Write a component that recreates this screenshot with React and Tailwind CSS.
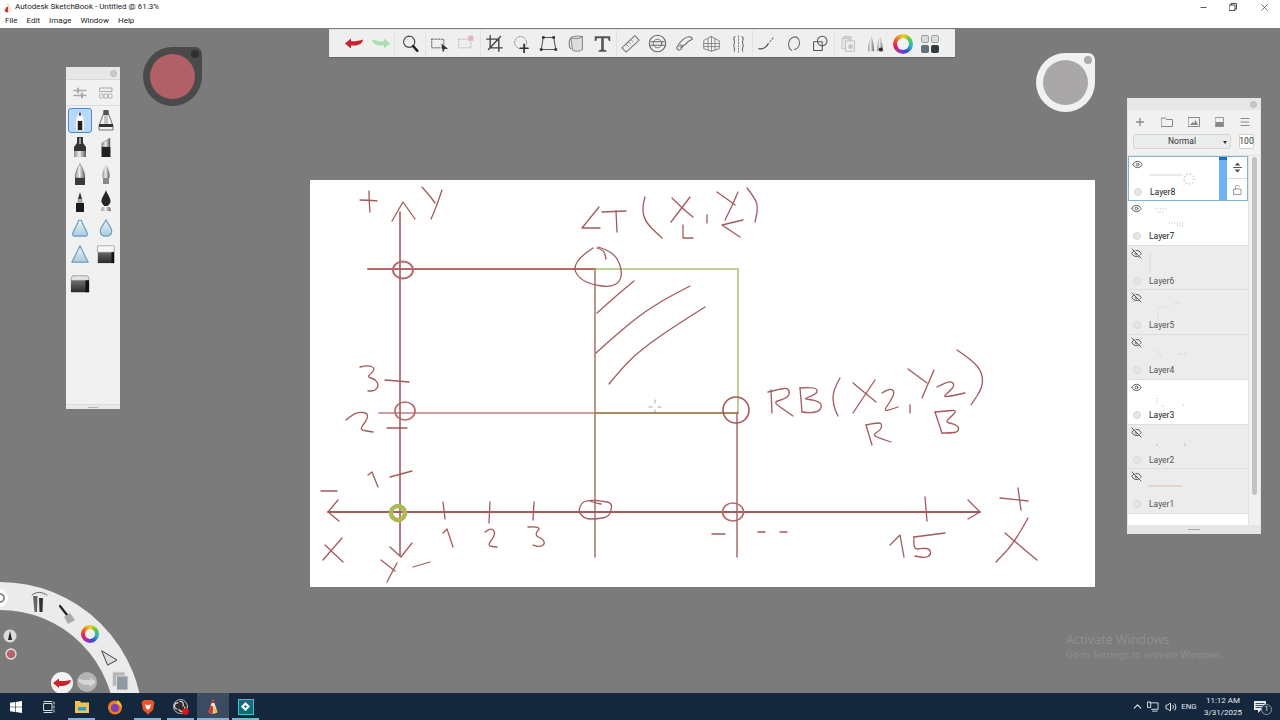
import React from "react";
import { Plus, Menu, Eye, EyeOff, ChevronUp, Minus, X, Volume2 } from "lucide-react";

const INK = "#a25a5c";

// page coordinates, the svg viewBox starts where the sheet starts
const smoothStrokes = [
  "360,200 368,200 377,201", "369,191 369,200 370,212",
  "422,187 430,196 435,203", "442,190 437,205 431,219",
  "593,248 582,255 573,268 580,279 593,285 610,287 620,282 622,271 617,257 607,250 598,247",
  "597,248 604,250 606,259",
  "645,197 642,207 645,222 662,238",
  "672,198 682,208 693,217", "690,197 681,209 671,222",
  "717,192 727,199 735,205", "738,192 732,206 725,220",
  "747,188 755,198 758,208 755,222",
  "360,367 368,365 375,368 372,373 367,377 375,379 379,385 375,391 368,391",
  "346,420 353,414 360,412 367,413 368,418 363,425 360,430 373,432",
  "485,532 490,528 495,531 494,537 487,546 497,547",
  "528,527 542,526 534,535 543,539 545,544 540,547 533,545",
  "840,378 833,390 833,405 838,416",
  "882,393 890,388 895,392 890,402 883,412 898,407",
  "937,387 950,380 955,385 949,392 942,398 965,393",
  "957,350 972,360 982,372 983,387 971,405",
  "768,392 780,389 788,388 790,394 785,399 773,402 783,409 793,416",
  "800,388 815,387 818,392 812,396 803,399 815,400 822,404 820,411 811,413 802,412",
  "866,425 875,423 882,423 881,430 872,435 882,439 891,442",
  "935,412 946,411 957,410 952,416 945,422 954,424 959,427 958,432 950,433 942,433",
  "914,537 913,550 922,548 930,549 931,555 925,558 915,556",
  "1028,518 1015,542 996,562", "1005,533 1020,546 1037,560",
  "579,512 580,503 590,500 602,501 612,503 611,511 608,517 597,519 585,519 579,512",
  "590,501 596,503 601,504",
  "597,313 617,295 634,281",
  "596,353 610,340 640,315 665,299 690,286",
  "609,384 627,362 650,343 675,326 705,307",
];

const sharpStrokes = [
  "392,221 403,202 415,219",
  "338,500 328,512 339,521",
  "390,547 401,557 412,543",
  "968,500 980,512 968,519",
  "599,207 582,228 600,228",
  "602,212 626,211", "616,211 617,232",
  "683,225 683,238 693,238",
  "707,215 707,223",
  "743,220 722,225 740,237",
  "385,380 409,382", "387,428 407,428", "390,477 412,471",
  "368,475 372,472 378,487", "321,491 337,491",
  "443,502 445,519", "490,502 489,523", "534,502 533,520",
  "443,533 447,529 453,547",
  "323,560 342,538", "325,545 343,562",
  "381,560 395,571", "397,563 387,582", "413,567 430,562",
  "771,390 772,413", "800,388 802,412",
  "853,383 876,402", "875,380 853,413", "910,405 910,413",
  "908,369 927,383", "934,370 922,398",
  "866,425 872,445", "935,412 942,433",
  "925,497 927,521", "890,545 900,535 904,557", "945,533 914,537",
  "1000,498 1028,501", "1018,488 1021,510",
  "712,534 725,534", "758,532 765,532", "780,532 787,532",
];

const smooth = (s) => {
  const pts = s.split(" ").map((p) => p.split(",").map(Number));
  let d = `M${pts[0][0]} ${pts[0][1]}`;
  for (let i = 1; i < pts.length - 1; i++) {
    const mx = (pts[i][0] + pts[i + 1][0]) / 2;
    const my = (pts[i][1] + pts[i + 1][1]) / 2;
    d += ` Q${pts[i][0]} ${pts[i][1]} ${mx} ${my}`;
  }
  const last = pts[pts.length - 1];
  return d + ` L${last[0]} ${last[1]}`;
};

const Sketch = () => (
  <svg viewBox="310 180 785 407" className="w-full h-full" fill="none" strokeLinecap="round" strokeLinejoin="round">
    <path d="M368 269H595" stroke="#b8696c" strokeWidth="2" />
    <path d="M595 269H738V412" stroke="#b3c07c" strokeWidth="1.6" />
    <path d="M379 413H595" stroke="#bd7f81" strokeWidth="1.7" />
    <path d="M595 413H738" stroke="#a9885a" strokeWidth="2" />
    <path d="M400 212V555" stroke={INK} strokeWidth="1.6" />
    <path d="M595 269V557" stroke="#a8706a" strokeWidth="1.5" />
    <path d="M737 413V557" stroke="#a8686a" strokeWidth="1.5" />
    <path d="M328 512H980" stroke={INK} strokeWidth="1.8" />
    <ellipse cx="403" cy="270" rx="10" ry="8.5" stroke="#b8696c" strokeWidth="2" />
    <ellipse cx="405" cy="411" rx="10" ry="9" stroke="#b8696c" strokeWidth="1.7" />
    <circle cx="736" cy="410" r="13" stroke="#a8585a" strokeWidth="1.6" />
    <ellipse cx="733" cy="512" rx="10.5" ry="9" stroke="#b8696c" strokeWidth="1.7" />
    <circle cx="398" cy="513" r="7" stroke="#a9bb55" strokeWidth="4.5" />
    {smoothStrokes.map((s) => (
      <path key={s} d={smooth(s)} stroke={INK} strokeWidth="1.3" />
    ))}
    {sharpStrokes.map((s) => (
      <polyline key={s} points={s} stroke={INK} strokeWidth="1.3" />
    ))}
    <path d="M655 400V403M655 410V413M649 407H652M658 407H661" stroke="#8a8a8a" strokeWidth="0.8" />
  </svg>
);

const ColorWheel = ({ className }) => (
  <div className={`${className} rounded-full flex items-center justify-center bg-[conic-gradient(#f4d020,#5cc83c,#2fb7c4,#3150d0,#a030c0,#e02050,#f07020,#f4d020)]`}>
    <div className="w-3/5 h-3/5 rounded-full bg-[#f2f2f2]" />
  </div>
);

const Ic = ({ w = 22, h = 22, vb = "0 0 22 22", children }) => (
  <svg width={w} height={h} viewBox={vb} fill="none" strokeLinecap="round" strokeLinejoin="round">
    {children}
  </svg>
);

const ArrowShape = ({ color, flip }) => (
  <svg width="20" height="13" viewBox="0 0 20 13" className={flip ? "-scale-x-100" : ""}>
    <path d="M1 6.5L7 1.5V4.2C11 4.5 15 4 19 2.5C18.5 6.5 15 9 7 8.5V11.5Z" fill={color} />
  </svg>
);

const toolGroups = [
  [
    <ArrowShape color="#c9242c" />,
    <ArrowShape color="#a9dfae" flip />,
  ],
  [
    <Ic><circle cx="9.5" cy="9" r="6.5" stroke="#444" strokeWidth="1.3" /><path d="M14 14L19 19.5" stroke="#222" strokeWidth="2.8" /></Ic>,
  ],
  [
    <Ic><path d="M2 6H16V16H2Z" stroke="#555" strokeDasharray="2 1.6" /><path d="M13 11L21 17L17 17.5L15 21.5Z" fill="#333" /></Ic>,
    <Ic><path d="M2 6H16V16H2Z" stroke="#bbb" strokeDasharray="2 1.6" /><rect x="13" y="2" width="6" height="6" fill="#e3b4be" /></Ic>,
  ],
  [
    <Ic><path d="M6 2V16H20M2 6H16V20M18 3L4 18" stroke="#444" strokeWidth="1.6" /></Ic>,
    <Ic><circle cx="10" cy="10" r="7" stroke="#888" strokeDasharray="2 1.6" /><path d="M14 12V21M9.5 16.5H18.5" stroke="#333" strokeWidth="2" /></Ic>,
    <Ic><path d="M5 4H17L19.5 18H2.5Z" stroke="#555" strokeWidth="1.2" /><g fill="#333"><rect x="3.5" y="2.5" width="3" height="3" /><rect x="15.5" y="2.5" width="3" height="3" /><rect x="1" y="16.5" width="3" height="3" /><rect x="18" y="16.5" width="3" height="3" /></g></Ic>,
    <Ic><path d="M6 4C9 2 16 2 19 3V18C16 20.5 11 20.5 8 19Z" fill="#ddd" stroke="#777" /><path d="M6 5C3 6 3 16 6 17" stroke="#777" strokeWidth="1.3" /><path d="M6 4C10 6 15 6 19 3" stroke="#777" /></Ic>,
    <Ic><path d="M2 2.5H20V8H18.5L17 5H12.5V18L15.5 19V20.5H6.5V19L9.5 18V5H5L3.5 8H2Z" fill="#555" /></Ic>,
  ],
  [
    <Ic><path d="M1 16L16 2L21 7L6 21Z" stroke="#777" strokeWidth="1.2" /><path d="M6 12L8 14M9 9.5L11 11.5M12 7L14 9" stroke="#777" /></Ic>,
    <Ic><circle cx="11" cy="11" r="9.5" stroke="#666" strokeWidth="1.3" /><path d="M3.5 9H18.5M3 13H19" stroke="#666" strokeWidth="1.3" /><ellipse cx="11" cy="11" rx="5" ry="5" stroke="#666" /></Ic>,
    <Ic><path d="M2 16C3 20 7 19 8 16C9 12 12 13 14 10C15 8 18 8 20 6C20 2 14 3 11 5C8 7 5 10 2 16Z" stroke="#666" strokeWidth="1.2" /><circle cx="7" cy="14" r="1.5" stroke="#666" /></Ic>,
    <Ic><path d="M11 3L20 8V17L11 20L2 17V8Z" stroke="#777" /><path d="M7 5.5V18.5M11 3V20M15 5.5V18.5M2 11H20M2 14.5H20" stroke="#777" strokeWidth="0.9" /></Ic>,
    <Ic><path d="M11 2V21" stroke="#777" strokeDasharray="2 1.6" /><path d="M7 3C3 5 8 8 6 11C4 14 8 17 6 20M15 3C19 5 14 8 16 11C18 14 14 17 16 20" stroke="#666" strokeWidth="1.2" /></Ic>,
  ],
  [
    <Ic><path d="M2 17C8 18 12 14 13 11" stroke="#444" strokeWidth="1.3" /><path d="M15 9L16 7.5M17.5 6L18.5 4.5" stroke="#777" strokeWidth="1.3" /></Ic>,
    <Ic><path d="M9 19C4 16 4 7 10 4C14 2 18 5 18 10C18 14 15 17 12 18" stroke="#666" strokeWidth="1.2" /></Ic>,
    <Ic><rect x="3" y="9" width="10" height="10" stroke="#555" strokeWidth="1.2" /><circle cx="13" cy="8" r="5.5" stroke="#555" strokeWidth="1.2" /></Ic>,
  ],
  [
    <Ic><path d="M6 3H14V15H6Z" fill="#ddd" stroke="#bbb" /><path d="M4 5H12V17H4Z" fill="#e6e6e6" stroke="#bbb" /><path d="M8 8H18V20H8Z" fill="#eee" stroke="#bbb" /><rect x="11" y="12" width="5" height="5" fill="#bfc7c7" /></Ic>,
    <Ic><path d="M6 2C8 7 9 12 9.5 20H2C2.5 12 4 7 6 2Z" fill="url(#metal)" /><path d="M16 2C18 7 19 12 20 20H12.5C13 12 14 7 16 2Z" fill="url(#metal)" /><circle cx="17" cy="18" r="2.4" fill="#333" /></Ic>,
    <ColorWheel className="w-[20px] h-[20px]" />,
    <div className="grid grid-cols-2 gap-[2px]">
      <div className="w-[8px] h-[8px] rounded-[2px] bg-[#d9dcdc] border border-[#9aa2a2]" />
      <div className="w-[8px] h-[8px] rounded-[2px] bg-[#d9dcdc] border border-[#9aa2a2]" />
      <div className="w-[8px] h-[8px] rounded-[2px] bg-[#63727a]" />
      <div className="w-[8px] h-[8px] rounded-[2px] bg-[#333a3e]" />
    </div>,
  ],
];

const Toolbar = () => (
  <div className="absolute left-[329px] top-px h-[28px] w-[626px] pl-[11px] flex bg-[#efefef] border-t border-[#e2e2e2] shadow-[0_1px_1px_#666]">
    {toolGroups.map((group, i) => (
      <div key={i} className="flex items-center border-r border-[#e2e2e2] last:border-r-0">
        {group.map((icon, j) => (
          <div
            key={j}
            className={`h-full flex items-center justify-center ${i === 1 ? "w-[30px]" : "w-[27px]"} ${i > 0 ? "[&>svg]:w-[19px] [&>svg]:h-[19px]" : ""}`}
          >
            {icon}
          </div>
        ))}
      </div>
    ))}
  </div>
);

const Gradients = () => (
  <svg className="absolute w-0 h-0">
    <defs>
      <linearGradient id="metal" x1="0" x2="1" y1="0" y2="0">
        <stop offset="0" stopColor="#8d8d8d" />
        <stop offset="0.45" stopColor="#ececec" />
        <stop offset="1" stopColor="#5a5a5a" />
      </linearGradient>
      <linearGradient id="blueFill" x1="0" x2="0" y1="0" y2="1">
        <stop offset="0" stopColor="#eef5fa" />
        <stop offset="1" stopColor="#a9c9df" />
      </linearGradient>
      <linearGradient id="eraser" x1="0" x2="0" y1="0" y2="1">
        <stop offset="0" stopColor="#8a8a8a" />
        <stop offset="1" stopColor="#2a2a2a" />
      </linearGradient>
    </defs>
  </svg>
);

const brushes = [
  <Ic w={20} h={22}><path d="M11 1L6.5 11V22H15.5V11Z" fill="#fff" /><path d="M11 1L9.7 6H12.3Z" fill="#222" /><path d="M8.5 12H13.5V22H8.5Z" fill="#222" /></Ic>,
  <Ic><path d="M8.5 1H13.5L14 6H8Z" fill="#555" /><path d="M8 6L4 17V21H18V17L14 6Z" fill="#f2f2f2" stroke="#555" strokeWidth="0.8" /><path d="M10 7V15M12 7V15" stroke="#777" strokeWidth="0.7" /><path d="M4 15H18V18H4Z" fill="#333" /></Ic>,
  <Ic><path d="M8 1H14V7L17 11V15H5V11L8 7Z" fill="#333" /><path d="M5 15H17V21H5Z" fill="url(#metal)" /><path d="M10 2H12V8H10Z" fill="#999" /></Ic>,
  <Ic><path d="M7 7L15 2V11H7Z" fill="url(#metal)" stroke="#777" strokeWidth="0.5" /><path d="M6.5 11H15.5V21H6.5Z" fill="#222" /></Ic>,
  <Ic><path d="M11 1C13 4 16 9 16 15H6C6 9 9 4 11 1Z" fill="url(#metal)" stroke="#666" strokeWidth="0.5" /><path d="M6 15H16V22H6Z" fill="#3a3a3a" /></Ic>,
  <Ic><path d="M11 1C14 6 15 11 14.5 15H7.5C7 11 8 6 11 1Z" fill="url(#metal)" /><path d="M8 15H14V21H8Z" fill="#888" /></Ic>,
  <Ic><path d="M11 2L13 9H9Z" fill="#333" /><path d="M8.5 9H13.5V13H8.5Z" fill="#aaa" /><path d="M7 13H15V22H7Z" fill="#1c1c1c" /></Ic>,
  <Ic><path d="M11 0C12 4 16 8 15.5 12C15 14 13 15 13 16H9C9 15 7 14 6.5 12C6 8 10 4 11 0Z" fill="#262626" /><path d="M7 17H15L16 21H6Z" fill="url(#metal)" /></Ic>,
  <Ic w={18} h={20}><path d="M9.5 1.5H12.5C14 7 18 12 20 18C20.5 20 19 21 17.5 21H4.5C3 21 1.5 20 2 18C4 12 8 7 9.5 1.5Z" fill="url(#blueFill)" stroke="#6d9dbd" strokeWidth="1.4" /></Ic>,
  <Ic w={18} h={20}><path d="M11 1C13 6 18 10 18 15C18 19 15 21 11 21C7 21 4 19 4 15C4 10 9 6 11 1Z" fill="url(#blueFill)" stroke="#6d9dbd" strokeWidth="1.4" /></Ic>,
  <Ic w={18} h={20}><path d="M11 1L21 21H1Z" fill="url(#blueFill)" stroke="#6d9dbd" strokeWidth="1.4" /></Ic>,
  <Ic w={20} h={20}><path d="M2 2H20V21H2Z" fill="url(#eraser)" /><path d="M2 2H20V9H2Z" fill="#f6f6f6" stroke="#999" strokeWidth="0.7" /><path d="M17 9H20V21H17Z" fill="#111" /></Ic>,
  <Ic w={20} h={20}><path d="M4 2H18C20 2 21 4 21 6V20H1V6C1 4 2 2 4 2Z" fill="url(#eraser)" /><path d="M4 2H18C20 2 21 4 21 7H1C1 4 2 2 4 2Z" fill="#e4e4e4" stroke="#888" strokeWidth="0.7" /><path d="M17 7H21V20H17Z" fill="#111" /></Ic>,
];

const GripCircle = () => <div className="w-[7px] h-[7px] rounded-full bg-[#c8c8c8] border border-[#bcbcbc]" />;

const BrushPanel = () => (
  <div className="absolute left-[66px] top-[39px] w-[54px] h-[342px] flex flex-col bg-[#f1f1f1]">
    <div className="h-[13px] shrink-0 bg-[#e6e8e8] flex items-center justify-end pr-[3px] border-b border-[#d8d8d8]">
      <GripCircle />
    </div>
    <div className="h-[26px] shrink-0 grid grid-cols-2 items-center justify-items-center px-px border-b border-[#dcdcdc]">
      <Ic w={14} h={12} vb="0 0 14 12">
        <path d="M1 3.5H13M1 8.5H13" stroke="#a9a9a9" strokeWidth="1.3" />
        <path d="M5 1.5V5.5M9 6.5V10.5" stroke="#a9a9a9" strokeWidth="2" />
      </Ic>
      <Ic w={14} h={12} vb="0 0 14 12">
        <rect x="1" y="1" width="12" height="3.5" stroke="#a9a9a9" />
        <path d="M1 7H4V11H1ZM5.5 7H8.5V11H5.5ZM10 7H13V11H10Z" stroke="#a9a9a9" strokeWidth="0.8" />
      </Ic>
    </div>
    <div className="grid grid-cols-2 auto-rows-[26.8px] justify-items-center items-center px-px pt-px">
      {brushes.map((brush, i) => (
        <div
          key={i}
          className={`w-[24px] h-[25px] flex items-center justify-center rounded-[3px] ${i === 0 ? "bg-[#b9d9f5] border border-[#4b8ed2]" : ""} ${i === 12 ? "mt-[5px]" : ""}`}
        >
          {brush}
        </div>
      ))}
    </div>
    <div className="mt-auto h-[5px] border-t border-[#dcdcdc] bg-[#e8e8e8] flex justify-center items-center">
      <div className="w-[10px] h-px bg-[#b5b5b5]" />
    </div>
  </div>
);

const Puck = ({ className, inner, dot }) => (
  <div className={`absolute w-[59px] h-[59px] rounded-[50%_7px_50%_50%] flex items-center justify-center ${className}`}>
    <div className={`w-[45px] h-[45px] rounded-full ${inner}`} />
    <div className={`absolute right-[3px] top-[3px] w-[8px] h-[8px] rounded-full ${dot}`} />
  </div>
);

const speck = "#c9b9b9";
const thumbs = {
  Layer8: <><path d="M20 18H54" stroke="#e0d6d6" /><circle cx="60" cy="22" r="5" stroke="#777" strokeWidth="0.9" strokeDasharray="1 2.4" /></>,
  Layer7: <path d="M27 8H39M29 11H35M41 22H57M49 24L55 25" stroke={speck} strokeWidth="1.2" strokeDasharray="1 1.6" />,
  Layer6: <path d="M22 8V26" stroke="#dad6c8" />,
  Layer5: <path d="M30 17V31M30 17H41M46 13H53" stroke="#ddd" />,
  Layer4: <path d="M29 16L33 21M51 19H59" stroke={speck} strokeDasharray="1 1.6" />,
  Layer3: <path d="M29 18V24M34 26H37M55 25H57" stroke={speck} strokeDasharray="1 1.6" />,
  Layer2: <path d="M28 20H30M57 18V21" stroke={speck} />,
  Layer1: <path d="M20 17H54" stroke="#d9bfb0" />,
};

const layers = [
  { name: "Layer8", on: true, active: true },
  { name: "Layer7", on: true },
  { name: "Layer6" },
  { name: "Layer5" },
  { name: "Layer4" },
  { name: "Layer3", on: true },
  { name: "Layer2" },
  { name: "Layer1" },
];

const LayerRow = ({ name, on, active }) => (
  <div
    className={`relative h-[44.75px] shrink-0 ${on ? "bg-white" : "bg-[#ececec]"} ${active ? "border border-[#84b3cd]" : "border-b border-[#dedede]"}`}
  >
    <svg className="absolute left-0 top-0" width="92" height="44" fill="none">{thumbs[name]}</svg>
    <div className="absolute left-[3px] top-[2px] text-[#555]">
      {on ? <Eye size={11} /> : <EyeOff size={11} />}
    </div>
    <div className="absolute left-[5px] top-[31px] w-[8px] h-[8px] rounded-full bg-[#e6e6e6] border border-[#d8d8d8]" />
    <div className={`absolute left-[21px] top-[29px] text-[8.5px] leading-[12px] ${on ? "text-[#222]" : "text-[#555]"}`}>{name}</div>
    {active && (
      <div className="absolute right-0 top-0 bottom-0 w-[28px] flex">
        <div className="w-[8px] bg-[#6db2f2] border-t-[3px] border-[#1f72c4]" />
        <div className="flex-1 flex flex-col">
          <div className="flex-1 flex items-center justify-center border-b border-[#dcdcdc]">
            <Ic w={9} h={11} vb="0 0 9 11">
              <path d="M4.5 0.5L7.5 3.5H1.5ZM4.5 10.5L7.5 7.5H1.5Z" fill="#555" />
              <path d="M0.5 5.5H8.5" stroke="#555" />
            </Ic>
          </div>
          <div className="flex-1 flex items-center justify-center">
            <Ic w={9} h={11} vb="0 0 9 11">
              <rect x="1" y="5" width="7" height="5.5" stroke="#999" />
              <path d="M2.5 5V2.5C2.5 1 6.5 1 6.5 2.5" stroke="#999" />
            </Ic>
          </div>
        </div>
      </div>
    )}
  </div>
);

const LayerPanel = () => (
  <div className="absolute left-[1127px] top-[70px] w-[134px] h-[436px] flex flex-col bg-[#f1f1f1] border-x border-[#e4e4e4]">
    <div className="h-[12px] shrink-0 bg-[#e6e8e8] flex items-center justify-end pr-[3px]">
      <GripCircle />
    </div>
    <div className="h-[24px] shrink-0 flex items-center justify-between pl-[6px] pr-[9px] text-[#888]">
      <Plus size={12} strokeWidth={2.6} />
      <Ic w={12} h={10} vb="0 0 12 10"><path d="M0.5 1H4.5L5.5 2.5H11.5V9.5H0.5Z" stroke="#888" /></Ic>
      <Ic w={12} h={10} vb="0 0 12 10"><rect x="0.5" y="0.5" width="11" height="9" stroke="#888" /><path d="M2 8L4.5 5L6 6.5L7.5 3L10 8Z" fill="#888" /></Ic>
      <Ic w={9} h={10} vb="0 0 9 10"><rect x="0.5" y="0.5" width="8" height="9" stroke="#999" /><rect x="0.5" y="5" width="8" height="4.5" fill="#888" /></Ic>
      <Menu size={12} />
    </div>
    <div className="h-[22px] shrink-0 flex items-start gap-[8px] pl-[5px] border-b border-[#e2e2e2]">
      <div className="w-[98px] h-[15px] rounded-[3px] border border-[#d5d5d5] bg-[#ebeded] flex items-center justify-center relative text-[8.5px] text-[#333]">
        Normal
        <div className="absolute right-[3px] top-[6px] border-x-[2.5px] border-t-[3px] border-x-transparent border-t-[#333]" />
      </div>
      <div className="w-[15px] h-[15px] rounded-[2px] border border-[#cfcfcf] bg-white flex items-center justify-center text-[8.5px] text-[#333]">100</div>
    </div>
    <div className="flex-1 flex min-h-0">
      <div className="w-[121px] flex flex-col bg-white border-r border-[#e2e2e2]">
        {layers.map((layer) => (
          <LayerRow key={layer.name} {...layer} />
        ))}
      </div>
      <div className="flex-1 flex justify-center pt-px">
        <div className="w-[5px] h-[338px] rounded-full bg-[#c2c2c2]" />
      </div>
    </div>
    <div className="h-[9px] shrink-0 bg-[#e6e6e6] flex items-center justify-center">
      <div className="w-[12px] h-px bg-[#aaa]" />
    </div>
  </div>
);

const MarkingMenu = () => (
  <div className="absolute left-0 bottom-0 w-[150px] h-[120px]">
    <svg viewBox="0 573 150 120" className="w-full h-full" fill="none" strokeLinecap="round" strokeLinejoin="round">
      <circle cx="0" cy="725" r="129" stroke="#ebebeb" strokeWidth="28" />
      <circle cx="-1" cy="598" r="9" fill="#fff" />
      <circle cx="0" cy="598" r="4" stroke="#777" strokeWidth="1.6" strokeDasharray="1.5 1" />
      <path d="M33 596H37.5L37 612H34.5Z" fill="#666" />
      <path d="M39 598H43L42.5 612H39.5Z" fill="#333" />
      <path d="M32 595C37 591 42 592 47 595" stroke="#666" />
      <path d="M60 606L67 615" stroke="#222" strokeWidth="2.2" />
      <path d="M64 617L70 613L75 620L68 624Z" fill="#aaa" />
      <path d="M102 651L117 660L108 665Z" fill="#ddd" stroke="#444" />
      <path d="M113 672H125V686H113Z" fill="#b5b5b5" stroke="#ddd" />
      <path d="M117 676H128V690H117Z" fill="#8d9aa0" stroke="#ddd" />
      <circle cx="10" cy="636" r="6.5" fill="#ddd" />
      <path d="M10 631L12 640H8Z" fill="#222" />
      <circle cx="11" cy="654" r="5" fill="#b5646a" stroke="#e4e4e4" strokeWidth="1.3" />
      <circle cx="62" cy="683" r="11" fill="#f3f3f3" />
      <path d="M53 683L59 678.5V681C63 681 67 681 71 680C70 684 67 686 59 686V688Z" fill="#c9242c" />
      <circle cx="87" cy="682" r="10" fill="#b3b3b3" />
      <path d="M96 682L90 677.5V680C86 680 82 680 78 679C79 683 82 685 90 685V687Z" fill="#d6d6d6" />
    </svg>
    <ColorWheel className="absolute left-[81px] top-[52px] w-[18px] h-[18px]" />
  </div>
);

const WinLogo = () => (
  <svg width="12" height="12" viewBox="0 0 12 12" fill="#fff">
    <path d="M0 1.7L5 1V5.7H0ZM5.6 .9L12 0V5.7H5.6ZM0 6.3H5V11L0 10.3ZM5.6 6.3H12V12L5.6 11.1Z" />
  </svg>
);

const taskIcons = [
  { w: "w-[32px]", icon: <WinLogo /> },
  { w: "w-[33px]", icon: <Ic w={13} h={12} vb="0 0 13 12"><rect x="2" y="2.5" width="8" height="7" stroke="#ddd" /><path d="M2 0.5H10M2 11.5H10M12 1V3M12 5V7M12 9V11" stroke="#ddd" /></Ic> },
  { w: "w-[33px]", on: true, icon: <Ic w={16} h={14} vb="0 0 16 14"><path d="M1 1H6L7 2.5H15V13H1Z" fill="#f0c14b" /><rect x="4" y="7" width="8" height="3.5" fill="#2f9bd8" /></Ic> },
  { w: "w-[33px]", icon: <Ic w={16} h={16} vb="0 0 16 16"><circle cx="8" cy="8.5" r="7" fill="#ef7b22" /><circle cx="8" cy="9" r="4" fill="#7a3fc0" /><path d="M11 1C14 4 15 7 15 9C13 6 11 5 9 5Z" fill="#f7c229" /></Ic> },
  { w: "w-[33px]", on: true, icon: <Ic w={14} h={16} vb="0 0 14 16"><path d="M3 1H11L13.5 3.5L12 11L7 15.5L2 11L0.5 3.5Z" fill="#e8552b" /><path d="M4 5L7 6.5L10 5L9 9L7 11L5 9Z" fill="#fff" /></Ic> },
  { w: "w-[33px]", on: true, icon: <Ic w={16} h={16} vb="0 0 16 16"><circle cx="7.5" cy="7.5" r="7" fill="#2b2b2b" stroke="#ddd" strokeWidth="0.8" /><path d="M7 2.5A3 3 0 0 1 10 7M11.5 8A3 3 0 0 1 6 10.5M4 10A3 3 0 0 1 5 4" stroke="#ddd" strokeWidth="1.2" /><circle cx="12.5" cy="12.5" r="3.2" fill="#e3101a" /></Ic> },
  { w: "w-[32px]", active: true, icon: <Ic w={12} h={18} vb="0 0 12 18"><path d="M6 1L10.5 14C8 16 4 16 1.5 14Z" fill="#f3e3d0" /><path d="M6 1L7.4 5H4.6Z" fill="#c22" /><path d="M3.5 8L1.5 14C3 15.5 5 15.5 6 15V8Z" fill="#d33a2c" /><path d="M7 9L10.5 14L7.5 15.5Z" fill="#f0b52f" /></Ic> },
  { w: "w-[33px]", on: true, icon: <div className="w-[16px] h-[16px] border border-[#35c6d0] bg-[#0f6f78] flex items-center justify-center"><Ic w={9} h={9} vb="0 0 9 9"><path d="M4.5 0L9 4.5L4.5 9L0 4.5ZM4.5 3L3 4.5L4.5 6L6 4.5Z" fill="#fff" fillRule="evenodd" /></Ic></div> },
];

const Taskbar = () => (
  <div className="h-[27px] shrink-0 bg-[#15273d] flex items-center text-[#e6e9ed]">
    {taskIcons.map((t, i) => (
      <div key={i} className={`relative h-full flex items-center justify-center ${t.w} ${t.active ? "bg-[#3c4b5f]" : ""}`}>
        {t.icon}
        {t.on && <div className="absolute left-[3px] right-[3px] bottom-0 h-[2px] bg-[#7fb4d8]" />}
        {t.active && <div className="absolute left-0 right-0 bottom-0 h-[2px] bg-[#7fb4d8]" />}
      </div>
    ))}
    <div className="ml-auto flex items-center h-full">
      <div className="w-[16px] flex justify-center"><ChevronUp size={13} /></div>
      <div className="w-[16px] flex justify-center">
        <Ic w={12} h={12} vb="0 0 13 13">
          <path d="M3 2H12V9H5M1 1H4V7H1ZM6 11H11" stroke="#dfe3e8" />
        </Ic>
      </div>
      <div className="w-[20px] flex justify-center"><Volume2 size={12} /></div>
      <div className="w-[16px] text-center text-[7.8px]">ENG</div>
      <div className="w-[52px] text-center text-[8px] leading-[12px]">
        <div>11:12 AM</div>
        <div>3/31/2025</div>
      </div>
      <div className="relative w-[31px] pr-[9px] h-full flex items-center justify-center">
        <Ic w={14} h={14} vb="0 0 14 14">
          <path d="M1 1H13V10H8L5 13V10H1Z" fill="#e8ebee" />
          <path d="M3 3.5H11M3 5.5H11M3 7.5H11" stroke="#15273d" strokeWidth="0.8" />
        </Ic>
        <div className="absolute left-[12px] top-[11px] w-[11px] h-[11px] rounded-full bg-[#1c2c40] border border-[#8c96a2] flex items-center justify-center text-[7px] leading-none">1</div>
      </div>
    </div>
  </div>
);

const TitleBar = () => (
  <div className="h-[14px] shrink-0 bg-white flex items-center text-[#222]">
    <div className="w-[15px] flex justify-center pl-px">
      <Ic w={8} h={11} vb="0 0 8 11">
        <path d="M4 0L7.5 9C6 11 2 11 .5 9Z" fill="#f1e2ce" />
        <path d="M2.5 5L.5 9C2 10.5 3.5 10.5 4 10V5Z" fill="#c53a2c" />
      </Ic>
    </div>
    <span className="text-[8px] leading-[14px]">Autodesk SketchBook - Untitled @ 61.3%</span>
    <div className="ml-auto flex items-center h-full">
      <div className="w-[30px] flex justify-center"><Minus size={9} /></div>
      <div className="w-[30px] flex justify-center">
        <Ic w={8} h={8} vb="0 0 8 8"><path d="M0.5 2H6V7.5H0.5ZM2 2V0.5H7.5V6H6" stroke="#222" strokeWidth="0.8" /></Ic>
      </div>
      <div className="w-[32px] flex justify-center"><X size={11} strokeWidth={1.4} /></div>
    </div>
  </div>
);

const menus = ["File", "Edit", "Image", "Window", "Help"];

export default function App() {
  return (
    <div className="w-[1280px] h-[720px] overflow-hidden flex flex-col font-['Roboto',sans-serif]">
      <Gradients />
      <TitleBar />
      <div className="h-[14px] shrink-0 bg-white flex items-center gap-[9px] pl-[5px] text-[8px] leading-[14px] text-[#222]">
        {menus.map((m) => (
          <span key={m}>{m}</span>
        ))}
      </div>
      <div className="relative flex-1 bg-[#7b7b7b] overflow-hidden">
        <Toolbar />
        <BrushPanel />
        <Puck className="left-[143px] top-[19px] bg-[#4a4a4a]" inner="bg-[#b06066]" dot="bg-[#303030]" />
        <Puck className="left-[1036px] top-[25px] bg-[#f1f1f1]" inner="bg-[#a9a7a8]" dot="bg-[#aaaaaa]" />
        <div className="absolute left-[310px] top-[152px] w-[785px] h-[407px] bg-white">
          <Sketch />
        </div>
        <LayerPanel />
        <MarkingMenu />
        <div className="absolute left-[1066px] top-[604px] text-[#8f8f8f] font-['Noto_Sans',sans-serif] pointer-events-none">
          <div className="text-[12.5px] leading-[16px]">Activate Windows</div>
          <div className="text-[9.5px] leading-[14px]">Go to Settings to activate Windows.</div>
        </div>
      </div>
      <Taskbar />
    </div>
  );
}
